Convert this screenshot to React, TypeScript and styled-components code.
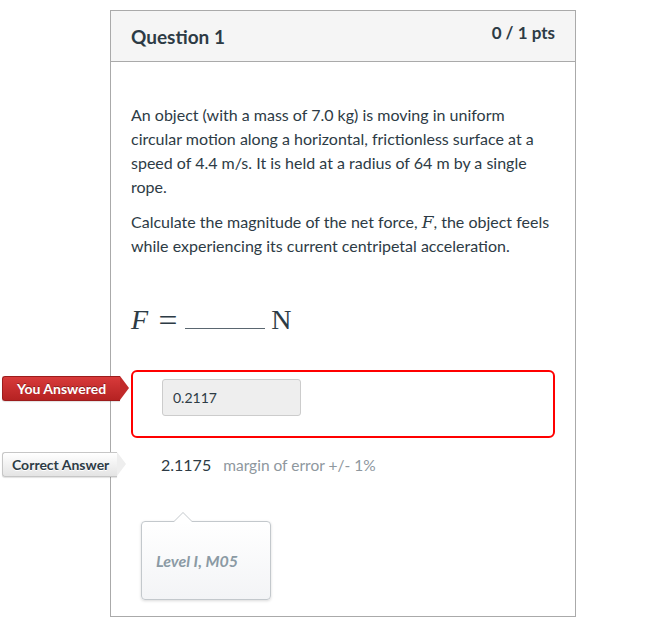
import React from "react";
import styled, { createGlobalStyle } from "styled-components";

const GlobalStyle = createGlobalStyle`
  html, body { margin: 0; padding: 0; background: #fff; }
  body { font-family: Lato, "Open Sans", sans-serif; color: #2d3b45; }
  * { box-sizing: border-box; }
`;

const Page = styled.div`
  padding: 10px 0 0 110px;
`;

const Card = styled.div`
  width: 466px;
  border: 1px solid #aaaaaa;
  background: #fff;
`;

const Header = styled.div`
  display: flex;
  justify-content: space-between;
  align-items: flex-start;
  height: 51px;
  padding: 13px 20px 0 20px;
  background: #f5f5f5;
  border-bottom: 1px solid #aaaaaa;
`;

const Title = styled.div`
  font-size: 19px;
  font-weight: 700;
  line-height: 26px;
`;

const Points = styled.div`
  font-size: 17px;
  font-weight: 700;
  line-height: 18px;
  margin-top: 0px;
`;

const Body = styled.div`
  padding: 41px 20px 16px 20px;
`;

const Para = styled.p`
  margin: 0 0 11px 0;
  font-size: 16px;
  line-height: 24px;
`;

const MathVar = styled.span`
  font-family: "DejaVu Serif", "Liberation Serif", serif;
  font-style: italic;
  font-size: 17px;
  line-height: 20px;
`;

const Equation = styled.div`
  display: flex;
  align-items: center;
  margin: 47px 0 0 0;
  height: 30px;
  font-family: "Liberation Serif", "DejaVu Serif", serif;
  font-size: 28px;
  color: #2d3b45;
`;

const EqF = styled.span`
  font-style: italic;
  margin-right: 11px;
`;

const EqEq = styled.span`
  display: inline-block;
  font-size: 32px;
  line-height: 30px;
  transform: scaleX(1.05);
  margin-right: 8px;
`;

const Blank = styled.span`
  display: inline-block;
  width: 80px;
  height: 1px;
  background: #5a6670;
  margin: 16px 6px 0 0;
`;

const AnswerRow = styled.div`
  position: relative;
`;

const WrongBox = styled.div`
  margin-top: 35px;
  border: 2px solid #ff0000;
  border-radius: 6px;
  padding: 7px 0 20px 29px;
`;

const InputBox = styled.div`
  width: 139px;
  height: 37px;
  background: #eeeeee;
  border: 1px solid #cccccc;
  border-radius: 3px;
  padding: 0 10px;
  display: flex;
  align-items: center;
  font-size: 14px;
  color: #2d3b45;
`;

const Tag = styled.div<{ $variant: "wrong" | "correct" }>`
  position: absolute;
  left: -129px;
  top: ${(p) => (p.$variant === "wrong" ? "6px" : "0px")};
  height: 25px;
  width: ${(p) => (p.$variant === "wrong" ? "118px" : "115px")};
  padding-left: ${(p) => (p.$variant === "wrong" ? "14px" : "9px")};
  display: flex;
  align-items: center;
  font-size: 14px;
  font-weight: 700;
  border-radius: 3px 0 0 3px;
  color: ${(p) => (p.$variant === "wrong" ? "#fff" : "#2d3b45")};
  text-shadow: ${(p) =>
    p.$variant === "wrong" ? "0 -1px 0 rgba(0,0,0,0.35)" : "0 1px 0 #fff"};
  background: ${(p) =>
    p.$variant === "wrong"
      ? "linear-gradient(#d83a3a, #b52222)"
      : "linear-gradient(#ffffff, #e4e4e4)"};
  border: 1px solid ${(p) => (p.$variant === "wrong" ? "#9c1c1c" : "#c6c6c6")};
  border-right: none;
  box-shadow: 0 1px 1px rgba(0, 0, 0, 0.12);

  &::after {
    content: "";
    position: absolute;
    right: -9px;
    top: -1px;
    width: 0;
    height: 0;
    border-top: 12.5px solid transparent;
    border-bottom: 12.5px solid transparent;
    border-left: 9px solid ${(p) => (p.$variant === "wrong" ? "#c12a2a" : "#eeeeee")};
  }
`;

const CorrectRow = styled.div`
  position: relative;
  margin-top: 14px;
  height: 25px;
  display: flex;
  align-items: center;
  padding-left: 30px;
`;

const CorrectValue = styled.span`
  font-size: 16px;
  color: #2d3b45;
  margin-right: 12px;
`;

const Margin = styled.span`
  font-size: 15.5px;
  color: #8e979e;
`;

const Tooltip = styled.div`
  position: relative;
  margin: 44px 0 0 10px;
  width: 130px;
  height: 79px;
  border: 1px solid #c3c8cc;
  border-radius: 4px;
  background: linear-gradient(#ffffff, #f3f4f6);
  box-shadow: 0 1px 3px rgba(0, 0, 0, 0.15);
  display: flex;
  align-items: center;
  padding-left: 14px;
  font-size: 16px;
  font-style: italic;
  font-weight: 700;
  color: #8b9aa4;

  &::before {
    content: "";
    position: absolute;
    top: -10px;
    left: 31px;
    border-left: 10px solid transparent;
    border-right: 10px solid transparent;
    border-bottom: 10px solid #c3c8cc;
  }
  &::after {
    content: "";
    position: absolute;
    top: -9px;
    left: 32px;
    border-left: 9px solid transparent;
    border-right: 9px solid transparent;
    border-bottom: 9px solid #ffffff;
  }
`;

export default function App() {
  return (
    <>
      <GlobalStyle />
      <Page>
        <Card>
          <Header>
            <Title>Question 1</Title>
            <Points>0 / 1 pts</Points>
          </Header>
          <Body>
            <Para>
              An object (with a mass of 7.0 kg) is moving in uniform circular
              motion along a horizontal, frictionless surface at a speed of 4.4
              m/s. It is held at a radius of 64 m by a single rope.
            </Para>
            <Para>
              Calculate the magnitude of the net force, <MathVar>F</MathVar>,
              the object feels while experiencing its current centripetal
              acceleration.
            </Para>
            <Equation>
              <EqF>F</EqF>
              <EqEq>=</EqEq>
              <Blank />
              <span>N</span>
            </Equation>
            <AnswerRow>
              <WrongBox>
                <InputBox>0.2117</InputBox>
              </WrongBox>
              <Tag $variant="wrong">You Answered</Tag>
            </AnswerRow>
            <CorrectRow>
              <Tag $variant="correct">Correct Answer</Tag>
              <CorrectValue>2.1175</CorrectValue>
              <Margin>margin of error +/- 1%</Margin>
            </CorrectRow>
            <Tooltip>Level I, M05</Tooltip>
          </Body>
        </Card>
      </Page>
    </>
  );
}
